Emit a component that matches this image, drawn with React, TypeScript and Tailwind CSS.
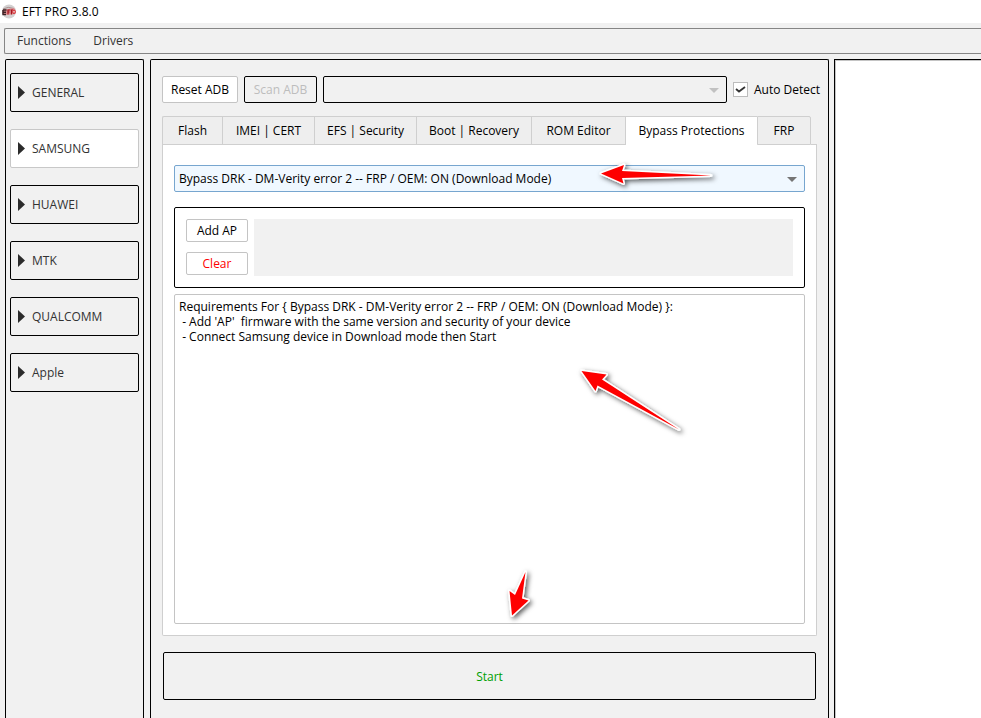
import type { ReactNode } from "react";

const categories = ["GENERAL", "SAMSUNG", "HUAWEI", "MTK", "QUALCOMM", "Apple"];

const tabs = [
  { label: "Flash", shape: "w-[60px] rounded-tl-xs" },
  { label: "IMEI | CERT", shape: "w-[92px]" },
  { label: "EFS | Security", shape: "w-[102px]" },
  { label: "Boot | Recovery", shape: "w-[115px]" },
  { label: "ROM Editor", shape: "w-[94px]" },
  { label: "Bypass Protections", shape: "w-[132px]" },
  { label: "FRP", shape: "w-[54px] rounded-tr-xs border-r" },
];

const mode = "Bypass DRK - DM-Verity error 2 -- FRP / OEM: ON (Download Mode)";

const requirements = `Requirements For { ${mode} }:
 - Add 'AP'  firmware with the same version and security of your device
 - Connect Samsung device in Download mode then Start`;

function Logo() {
  return (
    <svg viewBox="0 0 16 16" className="size-4" aria-hidden="true">
      <circle cx="8" cy="7.500" r="7" fill="#d3d0d0" />
      <path d="M2 5 Q7 2 13 4.500" stroke="#a58f8f" strokeWidth="1" fill="none" />
      <path d="M1.500 6L13 4L15 7L14.500 10L4 11L1.500 10Z" fill="#dc8d90" />
      <path d="M2 6h3.500M2 6v4.500h3M2 8.300h3" stroke="#3a2224" strokeWidth="1.400" fill="none" />
      <path d="M7 10.500V6h2M7 8h1.500M9.500 6h2.500M10.500 6V10.500" stroke="#a5151d" strokeWidth="1.200" fill="none" />
      <ellipse cx="13" cy="7.800" rx="1.300" ry="1.700" stroke="#d5272d" strokeWidth="1" fill="#f3cccc" />
    </svg>
  );
}

function DropDown({ label, value, disabled, className, arrow }: {
  label: string;
  value: string;
  disabled?: boolean;
  className: string;
  arrow: string;
}) {
  return (
    <div className="relative min-w-0 flex-1">
      <select
        aria-label={label}
        disabled={disabled}
        defaultValue={value}
        className={`block h-[27px] w-full appearance-none rounded-xs border px-1 opacity-100 ${className}`}
      >
        <option value={value}>{value}</option>
      </select>
      <svg viewBox="0 0 10 5" className="pointer-events-none absolute top-3 right-2 h-[5px] w-[10px]" aria-hidden="true">
        <path d="M0 0H10L5 5Z" fill={arrow} />
      </svg>
    </div>
  );
}

function Pointer({ children }: { children: ReactNode }) {
  return (
    <g fill="#fe0000" stroke="#fff" strokeWidth="3" strokeLinejoin="round" paintOrder="stroke" filter="url(#shade)">
      {children}
    </g>
  );
}

export default function App() {
  return (
    <div className="relative flex h-screen flex-col overflow-hidden bg-[#f1f1f1] font-['Open_Sans','Noto_Sans',sans-serif] text-[12px] leading-[16px] text-black">
      <header className="flex h-[23px] shrink-0 items-center gap-[5px] bg-white pl-px">
        <Logo />
        <h1>EFT PRO 3.8.0</h1>
      </header>

      <nav className="mt-[5px] ml-1 flex h-[26px] shrink-0 items-center gap-[22px] rounded-l-xs border border-r-0 border-[#858585] pl-3 text-[#333]">
        <button type="button">Functions</button>
        <button type="button">Drivers</button>
      </nav>

      <div className="mt-[5px] ml-[5px] flex min-h-0 flex-1">
        <aside className="mr-[6px] flex w-[139px] shrink-0 flex-col gap-[17px] rounded-t-xs border border-b-0 border-black px-1 pt-[13px]">
          {categories.map((name) => (
            <button
              key={name}
              type="button"
              className={`flex h-[39px] shrink-0 items-center gap-[7px] rounded-xs border pl-[7px] text-[#333] ${
                name === "SAMSUNG" ? "border-[#c8c8c8] bg-white" : "border-black"
              }`}
            >
              <svg viewBox="0 0 7 14" className="h-[14px] w-[7px]" aria-hidden="true">
                <path d="M0 0L7 6.500L0 13Z" fill="#2b2b2b" />
              </svg>
              {name}
            </button>
          ))}
        </aside>

        <main className="mr-[5px] flex min-w-0 flex-1 flex-col rounded-t-xs border border-b-0 border-black px-[11px] pt-4 pb-[18px]">
          <div className="flex shrink-0 items-center gap-[6px]">
            <button type="button" className="h-[27px] w-[76px] rounded-xs border border-[#c4c4c4] bg-white">Reset ADB</button>
            <button type="button" disabled className="h-[27px] w-[73px] rounded-xs border border-black text-[#bdbdbd]">Scan ADB</button>
            <DropDown label="Device" value="" disabled className="border-black bg-transparent" arrow="#c1c1c1" />
            <label className="flex items-center gap-[6px]">
              <span className="relative flex">
                <input type="checkbox" defaultChecked className="peer size-[15px] appearance-none border border-[#bcbcbc] bg-white" />
                <svg viewBox="0 0 15 15" className="pointer-events-none absolute inset-0 hidden size-[15px] peer-checked:block" aria-hidden="true">
                  <path d="M3 7L6 9.500L12 5" stroke="#333" strokeWidth="1.800" fill="none" />
                </svg>
              </span>
              <span className="w-[63px] whitespace-nowrap">Auto Detect</span>
            </label>
          </div>

          <div role="tablist" className="mt-[13px] flex shrink-0">
            {tabs.map(({ label, shape }) => {
              const active = label === "Bypass Protections";
              return (
                <button
                  key={label}
                  type="button"
                  role="tab"
                  aria-selected={active}
                  className={`h-[29px] shrink-0 whitespace-nowrap border-t border-l border-[#cfcfcf] ${shape} ${
                    active ? "bg-white" : "border-b bg-[#eee]"
                  }`}
                >
                  {label}
                </button>
              );
            })}
            <span className="mt-[28px] h-px flex-1 bg-[#cfcfcf]" />
          </div>

          <section className="flex min-h-0 flex-1 flex-col rounded-b-xs border border-t-0 border-[#cfcfcf] bg-white px-[11px] pt-5 pb-[11px]">
            <div className="flex">
              <DropDown label="Operation" value={mode} className="border-[#77a6cf] bg-[#f0f8ff]" arrow="#757575" />
            </div>

            <div className="mt-[15px] flex h-[81px] shrink-0 gap-[6px] rounded-xs border border-black p-[11px]">
              <div className="flex w-[62px] flex-col gap-[10px]">
                <button type="button" className="h-[23px] rounded-xs border border-[#c4c4c4] bg-white">Add AP</button>
                <button type="button" className="h-[23px] rounded-xs border border-[#c4c4c4] bg-white text-[#fe0000]">Clear</button>
              </div>
              <input aria-label="AP file" readOnly className="min-w-0 flex-1 bg-[#f1f1f1]" />
            </div>

            <textarea
              aria-label="Requirements"
              readOnly
              value={requirements}
              className="mt-[6px] block min-h-0 w-full flex-1 resize-none rounded-xs border border-[#c4c4c4] bg-white px-1 py-1 leading-[15px]"
            />
          </section>

          <button type="button" className="mx-px mt-4 h-[48px] shrink-0 rounded-xs border border-black pt-px text-[#00a000]">Start</button>
        </main>

        <section aria-label="Log" className="w-[147px] shrink-0 border-t border-l border-black bg-white">
          <div className="h-full border-t border-l border-[#c4c4c4]" />
        </section>
      </div>

      <svg className="pointer-events-none absolute top-0 left-0" width="981" height="718" viewBox="0 0 981 718" aria-hidden="true">
        <defs>
          <filter id="shade" x="-30%" y="-60%" width="170%" height="240%">
            <feDropShadow dx="2" dy="2" stdDeviation="2.500" floodColor="#000" floodOpacity="0.65" />
          </filter>
        </defs>
        <Pointer><path d="M601 173.500L624 165L622 171L711 175.500L622 178L623.500 183.500Z" /></Pointer>
        <Pointer><path d="M581.500 371L606.500 374.500L602 379.500L679 429.500L597.500 385.500L595.500 391Z" /></Pointer>
        <Pointer><path d="M512 615.500L509.500 591L515 595L525.500 572L522 598.500L528.500 600.500Z" /></Pointer>
      </svg>
    </div>
  );
}
